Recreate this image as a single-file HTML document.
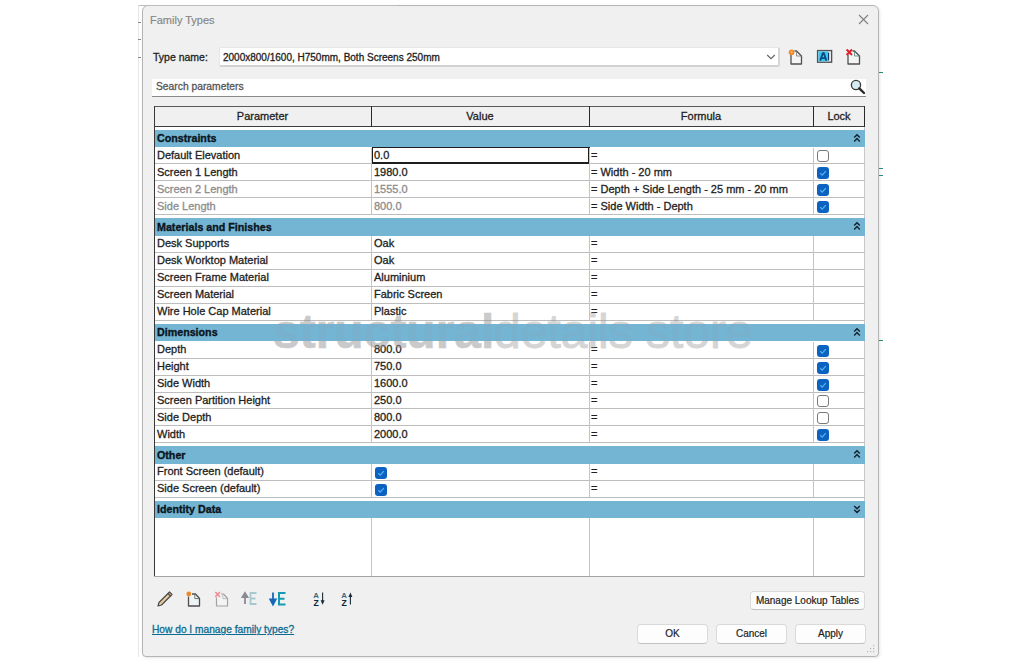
<!DOCTYPE html>
<html><head><meta charset="utf-8">
<style>
*{margin:0;padding:0;box-sizing:border-box}
html,body{width:1024px;height:662px;overflow:hidden;background:#fff;font-family:"Liberation Sans",sans-serif;color:#1e1e1e}
.a{position:absolute}
.t{position:absolute;white-space:nowrap;font-size:11px;line-height:13px;-webkit-text-stroke:0.3px currentColor}
#dlg{position:absolute;left:142px;top:5px;width:737px;height:652px;background:#f0f0f0;border:1px solid #b4b4b4;border-radius:6px 6px 4px 4px;box-shadow:1px 1px 3px rgba(0,0,0,0.10)}
#tbl{position:absolute;left:154px;top:106px;width:711px;height:471px;background:#fff}
.hdr{position:absolute;top:106px;height:21px;background:#f0f0f0;border-top:1px solid #5a5a5a;border-bottom:1px solid #3c3c3c;text-align:center;font-size:11px;line-height:19px;color:#1e1e1e}
.hsep{position:absolute;top:106px;height:21px;width:1px;background:#2a2a2a}
.band{position:absolute;background:#74b5d4}
.bt{position:absolute;font-weight:bold;font-size:10.7px;-webkit-text-stroke:0.35px currentColor;line-height:13px;white-space:nowrap;color:#0a1520}
.rl{position:absolute;height:1px;background:#bdbdbd}
.vl{position:absolute;width:1px;background:#c4c4c4}
.cb{position:absolute;width:12px;height:12px;border-radius:3px;background:#0b62c0}
.cb.off{background:#fff;border:1px solid #7a7a7a}
.btn{position:absolute;white-space:nowrap;height:21px;background:#fdfdfd;border:1px solid #dadada;border-bottom-color:#c2c2c2;border-radius:4px;text-align:center;font-size:11px;line-height:19px;color:#1e1e1e;-webkit-text-stroke:0.2px currentColor}
.wm{position:absolute;font-size:48px;line-height:56px;font-weight:bold;color:#969696;white-space:nowrap}

</style></head><body>
<div id="dlg"></div>
<div class="a" style="left:138px;top:5px;width:260px;height:1px;background:#bdbdbd"></div>
<div class="a" style="left:138px;top:5px;width:1px;height:652px;background:#e6e6e6"></div>
<div class="a" style="left:138px;top:22px;width:3px;height:1px;background:#888"></div><div class="a" style="left:138px;top:39px;width:3px;height:1px;background:#888"></div><div class="a" style="left:138px;top:57px;width:3px;height:1px;background:#888"></div>
<div class="t" style="left:150px;top:14px;color:#858585;-webkit-text-stroke:0.15px currentColor">Family Types</div>
<svg class="a" style="left:858px;top:14px" width="11" height="11" viewBox="0 0 11 11"><path d="M1 1 L10 10 M10 1 L1 10" stroke="#808080" stroke-width="1.1"/></svg>
<div class="t" style="left:153px;top:51px;font-size:10.5px">Type name:</div>
<div class="a" style="left:219px;top:47px;width:561px;height:20px;background:#fff;border:solid #e6e6e6;border-width:1px 2px 2px 1px;border-right-color:#d6d6d6;border-bottom-color:#d2d2d2;border-radius:2px"></div>
<div class="t" style="left:223px;top:51px;font-size:10px">2000x800/1600, H750mm, Both Screens 250mm</div>
<svg class="a" style="left:766px;top:54px" width="10" height="6" viewBox="0 0 10 6"><path d="M1.2 1 L5 4.6 L8.8 1" fill="none" stroke="#666" stroke-width="1.2"/></svg>
<!-- icon new type -->
<svg class="a" style="left:786px;top:46px" width="20" height="20" viewBox="0 0 20 20">
 <path d="M5 8.5 V18 H15.5 V10 L10.5 5 H8.5" fill="#f4f4f4" stroke="#505050" stroke-width="1.3" stroke-linejoin="round"/>
 <path d="M10.5 5 V10 H15.5" fill="none" stroke="#7a7a7a" stroke-width="0.8"/>
 <circle cx="5.6" cy="6.3" r="2.9" fill="#ef8a2a"/>
 <circle cx="5.6" cy="6.3" r="1" fill="#f8c080"/>
</svg>
<!-- icon rename -->
<svg class="a" style="left:815px;top:48px" width="20" height="17" viewBox="0 0 20 17">
 <rect x="2.6" y="2.6" width="14" height="11.6" fill="#fafafa" stroke="#505050" stroke-width="1.4"/>
 <rect x="3.4" y="3.4" width="9.6" height="10" fill="#3cc8ec"/>
 <path d="M5.2 12.6 L7.8 5.2 H8.8 L11.4 12.6 M6.3 10.2 H10.3" fill="none" stroke="#0a4a86" stroke-width="1.8"/>
 <path d="M13.6 4.6 V12.4" stroke="#0a3a6a" stroke-width="1.2"/>
</svg>
<!-- icon delete type -->
<svg class="a" style="left:844px;top:46px" width="20" height="20" viewBox="0 0 20 20">
 <path d="M4 8.5 V18 H15.5 V10 L10.5 5 H8.5" fill="#f4f4f4" stroke="#505050" stroke-width="1.3" stroke-linejoin="round"/>
 <path d="M10.5 5 V10 H15.5" fill="none" stroke="#4a8a7a" stroke-width="0.8"/>
 <path d="M2.6 3.5 L8 9 M8 3.5 L2.6 9" stroke="#e0202a" stroke-width="2"/>
</svg>
<div class="a" style="left:152px;top:79px;width:714px;height:18px;background:#fff;border-bottom:1px solid #8a8a8a"></div>
<div class="t" style="left:156px;top:80px;color:#555;font-size:10.3px">Search parameters</div>
<svg class="a" style="left:848px;top:77px" width="20" height="20" viewBox="0 0 20 20">
 <circle cx="8" cy="8" r="4.6" fill="#d4ecf4" stroke="#3a3a3a" stroke-width="1.3"/>
 <path d="M11.3 11.3 L16 16" stroke="#2a2a2a" stroke-width="2.4" stroke-linecap="round"/>
</svg>
<div id="tbl"></div>
<div class="hdr" style="left:154px;width:711px"></div>
<div class="a" style="left:154px;top:106px;width:1px;height:471px;background:#383838"></div>
<div class="a" style="left:154px;top:576px;width:711px;height:1px;background:#a4a4a4"></div>
<div class="a" style="left:864px;top:106px;width:1px;height:471px;background:#c8c8c8"></div>
<div class="hsep" style="left:371px"></div>
<div class="hsep" style="left:589px"></div>
<div class="hsep" style="left:813px"></div>
<div class="hsep" style="left:864px"></div>
<div class="t" style="left:154px;top:110px;width:217px;text-align:center">Parameter</div>
<div class="t" style="left:371px;top:110px;width:218px;text-align:center">Value</div>
<div class="t" style="left:589px;top:110px;width:224px;text-align:center">Formula</div>
<div class="t" style="left:813px;top:110px;width:52px;text-align:center">Lock</div>
<div class="band" style="left:155px;top:130px;width:710px;height:17px"></div>
<div class="bt" style="left:157px;top:132px">Constraints</div>
<svg class="a" style="left:853px;top:133px" width="8" height="11" viewBox="0 0 8 11"><path d="M1.2 4.6 L4 1.8 L6.8 4.6 M1.2 8.4 L4 5.6 L6.8 8.4" fill="none" stroke="#14202c" stroke-width="1.4"/></svg>
<div class="rl" style="left:155px;top:163px;width:710px"></div>
<div class="t" style="left:157px;top:149px;color:#1e1e1e">Default Elevation</div>
<div class="t" style="left:374px;top:149px;color:#1e1e1e">0.0</div>
<div class="t" style="left:591px;top:149px;color:#1e1e1e">=</div>
<div class="cb off" style="left:817px;top:150px"></div>
<div class="a" style="left:372px;top:147px;width:218px;height:17px;border:solid #1e1e1e;border-width:1px 2px 2px 1px"></div>
<div class="rl" style="left:155px;top:180px;width:710px"></div>
<div class="t" style="left:157px;top:166px;color:#1e1e1e">Screen 1 Length</div>
<div class="t" style="left:374px;top:166px;color:#1e1e1e">1980.0</div>
<div class="t" style="left:591px;top:166px;color:#1e1e1e">= Width - 20 mm</div>
<div class="cb" style="left:817px;top:167px"></div><svg class="a" style="left:817px;top:167px" width="12" height="12" viewBox="0 0 12 12"><path d="M3.2 6.2 L5.2 8.2 L8.8 4.2" fill="none" stroke="#5ab4f4" stroke-width="1.2"/></svg>
<div class="rl" style="left:155px;top:197px;width:710px"></div>
<div class="t" style="left:157px;top:183px;color:#8c8c8c">Screen 2 Length</div>
<div class="t" style="left:374px;top:183px;color:#8c8c8c">1555.0</div>
<div class="t" style="left:591px;top:183px;color:#1e1e1e">= Depth + Side Length - 25 mm - 20 mm</div>
<div class="cb" style="left:817px;top:184px"></div><svg class="a" style="left:817px;top:184px" width="12" height="12" viewBox="0 0 12 12"><path d="M3.2 6.2 L5.2 8.2 L8.8 4.2" fill="none" stroke="#5ab4f4" stroke-width="1.2"/></svg>
<div class="rl" style="left:155px;top:214px;width:710px"></div>
<div class="t" style="left:157px;top:200px;color:#8c8c8c">Side Length</div>
<div class="t" style="left:374px;top:200px;color:#8c8c8c">800.0</div>
<div class="t" style="left:591px;top:200px;color:#1e1e1e">= Side Width - Depth</div>
<div class="cb" style="left:817px;top:201px"></div><svg class="a" style="left:817px;top:201px" width="12" height="12" viewBox="0 0 12 12"><path d="M3.2 6.2 L5.2 8.2 L8.8 4.2" fill="none" stroke="#5ab4f4" stroke-width="1.2"/></svg>
<div class="band" style="left:155px;top:218px;width:710px;height:18px"></div>
<div class="bt" style="left:157px;top:221px">Materials and Finishes</div>
<svg class="a" style="left:853px;top:221px" width="8" height="11" viewBox="0 0 8 11"><path d="M1.2 4.6 L4 1.8 L6.8 4.6 M1.2 8.4 L4 5.6 L6.8 8.4" fill="none" stroke="#14202c" stroke-width="1.4"/></svg>
<div class="rl" style="left:155px;top:252px;width:710px"></div>
<div class="t" style="left:157px;top:237px;color:#1e1e1e">Desk Supports</div>
<div class="t" style="left:374px;top:237px;color:#1e1e1e">Oak</div>
<div class="t" style="left:591px;top:237px;color:#1e1e1e">=</div>
<div class="rl" style="left:155px;top:269px;width:710px"></div>
<div class="t" style="left:157px;top:254px;color:#1e1e1e">Desk Worktop Material</div>
<div class="t" style="left:374px;top:254px;color:#1e1e1e">Oak</div>
<div class="t" style="left:591px;top:254px;color:#1e1e1e">=</div>
<div class="rl" style="left:155px;top:286px;width:710px"></div>
<div class="t" style="left:157px;top:271px;color:#1e1e1e">Screen Frame Material</div>
<div class="t" style="left:374px;top:271px;color:#1e1e1e">Aluminium</div>
<div class="t" style="left:591px;top:271px;color:#1e1e1e">=</div>
<div class="rl" style="left:155px;top:303px;width:710px"></div>
<div class="t" style="left:157px;top:288px;color:#1e1e1e">Screen Material</div>
<div class="t" style="left:374px;top:288px;color:#1e1e1e">Fabric Screen</div>
<div class="t" style="left:591px;top:288px;color:#1e1e1e">=</div>
<div class="rl" style="left:155px;top:320px;width:710px"></div>
<div class="t" style="left:157px;top:305px;color:#1e1e1e">Wire Hole Cap Material</div>
<div class="t" style="left:374px;top:305px;color:#1e1e1e">Plastic</div>
<div class="t" style="left:591px;top:305px;color:#1e1e1e">=</div>
<div class="band" style="left:155px;top:324px;width:710px;height:17px"></div>
<div class="bt" style="left:157px;top:326px">Dimensions</div>
<svg class="a" style="left:853px;top:327px" width="8" height="11" viewBox="0 0 8 11"><path d="M1.2 4.6 L4 1.8 L6.8 4.6 M1.2 8.4 L4 5.6 L6.8 8.4" fill="none" stroke="#14202c" stroke-width="1.4"/></svg>
<div class="rl" style="left:155px;top:358px;width:710px"></div>
<div class="t" style="left:157px;top:343px;color:#1e1e1e">Depth</div>
<div class="t" style="left:374px;top:343px;color:#1e1e1e">800.0</div>
<div class="t" style="left:591px;top:343px;color:#1e1e1e">=</div>
<div class="cb" style="left:817px;top:345px"></div><svg class="a" style="left:817px;top:345px" width="12" height="12" viewBox="0 0 12 12"><path d="M3.2 6.2 L5.2 8.2 L8.8 4.2" fill="none" stroke="#5ab4f4" stroke-width="1.2"/></svg>
<div class="rl" style="left:155px;top:375px;width:710px"></div>
<div class="t" style="left:157px;top:360px;color:#1e1e1e">Height</div>
<div class="t" style="left:374px;top:360px;color:#1e1e1e">750.0</div>
<div class="t" style="left:591px;top:360px;color:#1e1e1e">=</div>
<div class="cb" style="left:817px;top:362px"></div><svg class="a" style="left:817px;top:362px" width="12" height="12" viewBox="0 0 12 12"><path d="M3.2 6.2 L5.2 8.2 L8.8 4.2" fill="none" stroke="#5ab4f4" stroke-width="1.2"/></svg>
<div class="rl" style="left:155px;top:392px;width:710px"></div>
<div class="t" style="left:157px;top:377px;color:#1e1e1e">Side Width</div>
<div class="t" style="left:374px;top:377px;color:#1e1e1e">1600.0</div>
<div class="t" style="left:591px;top:377px;color:#1e1e1e">=</div>
<div class="cb" style="left:817px;top:379px"></div><svg class="a" style="left:817px;top:379px" width="12" height="12" viewBox="0 0 12 12"><path d="M3.2 6.2 L5.2 8.2 L8.8 4.2" fill="none" stroke="#5ab4f4" stroke-width="1.2"/></svg>
<div class="rl" style="left:155px;top:408px;width:710px"></div>
<div class="t" style="left:157px;top:394px;color:#1e1e1e">Screen Partition Height</div>
<div class="t" style="left:374px;top:394px;color:#1e1e1e">250.0</div>
<div class="t" style="left:591px;top:394px;color:#1e1e1e">=</div>
<div class="cb off" style="left:817px;top:395px"></div>
<div class="rl" style="left:155px;top:425px;width:710px"></div>
<div class="t" style="left:157px;top:411px;color:#1e1e1e">Side Depth</div>
<div class="t" style="left:374px;top:411px;color:#1e1e1e">800.0</div>
<div class="t" style="left:591px;top:411px;color:#1e1e1e">=</div>
<div class="cb off" style="left:817px;top:412px"></div>
<div class="rl" style="left:155px;top:442px;width:710px"></div>
<div class="t" style="left:157px;top:428px;color:#1e1e1e">Width</div>
<div class="t" style="left:374px;top:428px;color:#1e1e1e">2000.0</div>
<div class="t" style="left:591px;top:428px;color:#1e1e1e">=</div>
<div class="cb" style="left:817px;top:429px"></div><svg class="a" style="left:817px;top:429px" width="12" height="12" viewBox="0 0 12 12"><path d="M3.2 6.2 L5.2 8.2 L8.8 4.2" fill="none" stroke="#5ab4f4" stroke-width="1.2"/></svg>
<div class="band" style="left:155px;top:446px;width:710px;height:18px"></div>
<div class="bt" style="left:157px;top:449px">Other</div>
<svg class="a" style="left:853px;top:449px" width="8" height="11" viewBox="0 0 8 11"><path d="M1.2 4.6 L4 1.8 L6.8 4.6 M1.2 8.4 L4 5.6 L6.8 8.4" fill="none" stroke="#14202c" stroke-width="1.4"/></svg>
<div class="rl" style="left:155px;top:480px;width:710px"></div>
<div class="t" style="left:157px;top:465px;color:#1e1e1e">Front Screen (default)</div>
<div class="cb" style="left:375px;top:467px"></div><svg class="a" style="left:375px;top:467px" width="12" height="12" viewBox="0 0 12 12"><path d="M3.2 6.2 L5.2 8.2 L8.8 4.2" fill="none" stroke="#5ab4f4" stroke-width="1.2"/></svg>
<div class="t" style="left:591px;top:465px;color:#1e1e1e">=</div>
<div class="rl" style="left:155px;top:497px;width:710px"></div>
<div class="t" style="left:157px;top:482px;color:#1e1e1e">Side Screen (default)</div>
<div class="cb" style="left:375px;top:484px"></div><svg class="a" style="left:375px;top:484px" width="12" height="12" viewBox="0 0 12 12"><path d="M3.2 6.2 L5.2 8.2 L8.8 4.2" fill="none" stroke="#5ab4f4" stroke-width="1.2"/></svg>
<div class="t" style="left:591px;top:482px;color:#1e1e1e">=</div>
<div class="band" style="left:155px;top:501px;width:710px;height:17px"></div>
<div class="bt" style="left:157px;top:503px">Identity Data</div>
<svg class="a" style="left:853px;top:504px" width="8" height="11" viewBox="0 0 8 11"><path d="M1.2 2 L4 4.8 L6.8 2 M1.2 5.8 L4 8.6 L6.8 5.8" fill="none" stroke="#14202c" stroke-width="1.4"/></svg>
<div class="vl" style="left:371px;top:148px;height:67px"></div>
<div class="vl" style="left:589px;top:148px;height:67px"></div>
<div class="vl" style="left:813px;top:148px;height:67px"></div>
<div class="vl" style="left:371px;top:236px;height:85px"></div>
<div class="vl" style="left:589px;top:236px;height:85px"></div>
<div class="vl" style="left:813px;top:236px;height:85px"></div>
<div class="vl" style="left:371px;top:342px;height:101px"></div>
<div class="vl" style="left:589px;top:342px;height:101px"></div>
<div class="vl" style="left:813px;top:342px;height:101px"></div>
<div class="vl" style="left:371px;top:464px;height:34px"></div>
<div class="vl" style="left:589px;top:464px;height:34px"></div>
<div class="vl" style="left:813px;top:464px;height:34px"></div>
<div class="vl" style="left:371px;top:518px;height:58px"></div>
<div class="vl" style="left:589px;top:518px;height:58px"></div>
<div class="vl" style="left:813px;top:518px;height:58px"></div>
<div class="a" style="left:0;top:0;width:1024px;height:662px;opacity:0.5;clip-path:polygon(0 0,1024px 0,1024px 324px,0 324px,0 341px,1024px 341px,1024px 662px,0 662px)"><div class="wm" style="left:273px;top:304px;-webkit-text-stroke:0.6px currentColor">structural</div></div>
<div class="a" style="left:0;top:0;width:1024px;height:662px;opacity:0.4;clip-path:polygon(0 0,1024px 0,1024px 324px,0 324px,0 341px,1024px 341px,1024px 662px,0 662px)"><div class="wm" style="left:494px;top:304px;font-weight:normal;-webkit-text-stroke:0.9px currentColor">details store</div></div>
<div class="a" style="left:0;top:324px;width:1024px;height:17px;overflow:hidden;opacity:0.1"><div class="wm" style="left:273px;top:-20px;-webkit-text-stroke:0.6px currentColor">structural</div><div class="wm" style="left:494px;top:-20px;font-weight:normal;-webkit-text-stroke:0.9px currentColor">details store</div></div>
<!-- bottom toolbar -->
<svg class="a" style="left:154px;top:589px" width="22" height="20" viewBox="0 0 22 20">
 <path d="M4 17 L5 13.5 L15.5 3 L18 5.5 L7.5 16 Z" fill="#e8c9a0" stroke="#4a4a4a" stroke-width="1.2" stroke-linejoin="round"/>
 <path d="M14 4.5 L16.5 7" stroke="#4a4a4a" stroke-width="1.2"/>
</svg>
<svg class="a" style="left:183px;top:589px" width="20" height="20" viewBox="0 0 20 20">
 <path d="M5.5 7.5 V17 H16.5 V9.5 L12.5 5 H9" fill="#eef4f6" stroke="#4e4e4e" stroke-width="1.3" stroke-linejoin="round"/>
 <path d="M11.8 5.3 V9.6 H16.2" fill="none" stroke="#6a6a6a" stroke-width="0.9"/>
 <circle cx="5.8" cy="5" r="2.4" fill="#ee8a2c"/>
</svg>
<svg class="a" style="left:211px;top:589px" width="20" height="20" viewBox="0 0 20 20">
 <path d="M5.5 8.5 V17 H16.5 V9.5 L12.5 5 H10" fill="#f4f4f4" stroke="#a4a4a4" stroke-width="1.2" stroke-linejoin="round"/>
 <path d="M11.8 5.3 V9.6 H16.2" fill="none" stroke="#b8b8b8" stroke-width="0.9"/>
 <path d="M4.3 3 L9 7.8 M9 3 L4.3 7.8" stroke="#f0909a" stroke-width="1.7"/>
</svg>
<svg class="a" style="left:240px;top:589px" width="20" height="20" viewBox="0 0 20 20">
 <path d="M5 15 V7 M2.5 8 L5 4 L7.5 8 Z" fill="#8a8a94" stroke="#8a8a94" stroke-width="1.8"/>
 <path d="M16.5 4 H10.5 V15 H16.5 M10.5 9.5 H15.5" fill="none" stroke="#a8c8d0" stroke-width="1.8"/>
</svg>
<svg class="a" style="left:268px;top:589px" width="20" height="20" viewBox="0 0 20 20">
 <path d="M5 3.5 V12 M2.3 10.5 L5 15.5 L7.7 10.5 Z" fill="#1568b8" stroke="#1568b8" stroke-width="1.8"/>
 <path d="M17.5 4 H11 V15.5 H17.5 M11 9.7 H16.5" fill="none" stroke="#129cb4" stroke-width="2"/>
</svg>
<svg class="a" style="left:310px;top:589px" width="20" height="20" viewBox="0 0 20 20">
 <text x="6" y="8.7" font-family="Liberation Sans" font-weight="bold" font-size="7.8" text-anchor="middle" fill="#3d6878">A</text>
 <text x="6" y="16.6" font-family="Liberation Sans" font-weight="bold" font-size="8.6" text-anchor="middle" fill="#0c2636">Z</text>
 <path d="M12.6 3.6 V12" stroke="#1a2a36" stroke-width="1.1"/><path d="M10.6 11.3 L14.6 11.3 L12.6 15.8 Z" fill="#1a2a36"/>
</svg>
<svg class="a" style="left:338px;top:589px" width="20" height="20" viewBox="0 0 20 20">
 <text x="6" y="8.7" font-family="Liberation Sans" font-weight="bold" font-size="7.8" text-anchor="middle" fill="#3d6878">A</text>
 <text x="6" y="16.6" font-family="Liberation Sans" font-weight="bold" font-size="8.6" text-anchor="middle" fill="#0c2636">Z</text>
 <path d="M12.4 15.6 V7" stroke="#1a2a36" stroke-width="1.1"/><path d="M10.4 8 L14.4 8 L12.4 3.5 Z" fill="#1a2a36"/>
</svg>
<div class="btn" style="left:750px;top:591px;width:115px;height:19px;line-height:17px;font-size:10px">Manage Lookup Tables</div>
<div class="btn" style="left:637px;top:624px;width:71px;height:20px;line-height:18px;font-size:10px">OK</div>
<div class="btn" style="left:716px;top:624px;width:71px;height:20px;line-height:18px;font-size:10px">Cancel</div>
<div class="btn" style="left:795px;top:624px;width:71px;height:20px;line-height:18px;font-size:10px">Apply</div>
<div class="t" style="left:152px;top:623px;color:#0d6c92;text-decoration:underline;font-size:10.2px">How do I manage family types?</div>
<svg class="a" style="left:866px;top:644px" width="10" height="10" viewBox="0 0 10 10"><g fill="#b8b8b8"><rect x="7" y="1" width="1.2" height="1.2"/><rect x="4" y="4" width="1.2" height="1.2"/><rect x="7" y="4" width="1.2" height="1.2"/><rect x="1" y="7" width="1.2" height="1.2"/><rect x="4" y="7" width="1.2" height="1.2"/><rect x="7" y="7" width="1.2" height="1.2"/></g></svg>
<div class="a" style="left:879px;top:72px;width:4px;height:1px;background:#2a8a7a"></div>
<div class="a" style="left:879px;top:168px;width:4px;height:1px;background:#2a8a7a"></div>
<div class="a" style="left:879px;top:175px;width:4px;height:1px;background:#2a8a7a"></div>
<div class="a" style="left:879px;top:340px;width:4px;height:1px;background:#2a8a7a"></div>

</body></html>
